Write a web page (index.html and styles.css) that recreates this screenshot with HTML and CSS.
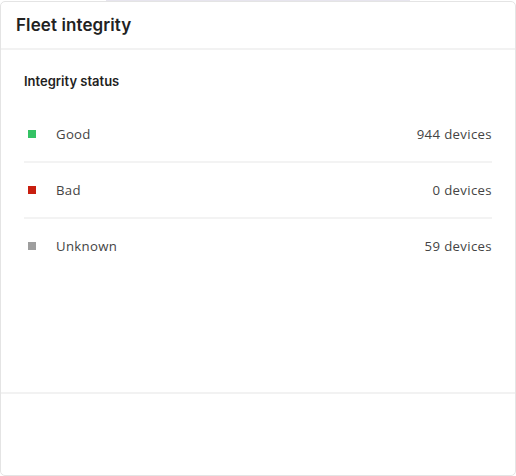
FILE: index.html
```html
<!DOCTYPE html>
<html>
<head>
<meta charset="utf-8">
<link rel="stylesheet" href="styles.css">
</head>
<body>
<div class="topstrip"></div>
<div class="card">
  <div class="card-header">
    <h1 class="title">Fleet integrity</h1>
  </div>
  <div class="card-body">
    <h2 class="subtitle">Integrity status</h2>
    <ul class="list">
      <li class="row">
        <span class="dot dot-good"></span>
        <span class="label">Good</span>
        <span class="value">944 devices</span>
      </li>
      <li class="row">
        <span class="dot dot-bad"></span>
        <span class="label">Bad</span>
        <span class="value">0 devices</span>
      </li>
      <li class="row row-last">
        <span class="dot dot-unknown"></span>
        <span class="label">Unknown</span>
        <span class="value">59 devices</span>
      </li>
    </ul>
  </div>
  <div class="card-footer"></div>
</div>
</body>
</html>
```

FILE: styles.css
```css
html, body {
  margin: 0;
  padding: 0;
  background: #ffffff;
}
body {
  width: 516px;
  height: 476px;
  overflow: hidden;
  font-family: "Open Sans", "Noto Sans", sans-serif;
}
.topstrip {
  height: 1px;
  width: 304px;
  margin-left: 106px;
  background: #e7e5ee;
}
.card {
  box-sizing: border-box;
  height: 475px;
  width: 516px;
  border: 1px solid #e4e4e4;
  border-radius: 5px;
  display: flex;
  flex-direction: column;
  background: #fff;
}
.card-header {
  height: 46px;
  border-bottom: 2px solid #f2f2f2;
  display: flex;
  align-items: center;
  padding-left: 15px;
}
.title {
  margin: 0;
  font-family: "Inter", "Noto Sans", sans-serif;
  font-size: 17px;
  font-weight: 600;
  color: #222;
  letter-spacing: 0.1px;
}
.card-body {
  flex: 1;
  padding: 22px 23px 0 23px;
}
.subtitle {
  margin: 0;
  font-family: "Inter", "Noto Sans", sans-serif;
  font-size: 13px;
  line-height: 18px;
  font-weight: 600;
  color: #1f1f1f;
  letter-spacing: 0;
}
.list {
  list-style: none;
  margin: 17px 0 0 0;
  padding: 0;
}
.row {
  height: 54px;
  border-bottom: 2px solid #f3f3f3;
  display: flex;
  align-items: center;
  font-size: 13.2px;
  color: #444;
}
.row-last {
  border-bottom: none;
}
.dot {
  width: 8px;
  height: 8px;
  margin-left: 4px;
  margin-right: 20px;
}
.dot-good { background: #34c264; }
.dot-bad { background: #c81e0f; }
.dot-unknown { background: #9e9e9e; }
.label {
  flex: 1;
  letter-spacing: 0.3px;
}
.value {
  letter-spacing: 0.35px;
}
.card-footer {
  height: 81px;
  border-top: 2px solid #f2f2f2;
}
```
